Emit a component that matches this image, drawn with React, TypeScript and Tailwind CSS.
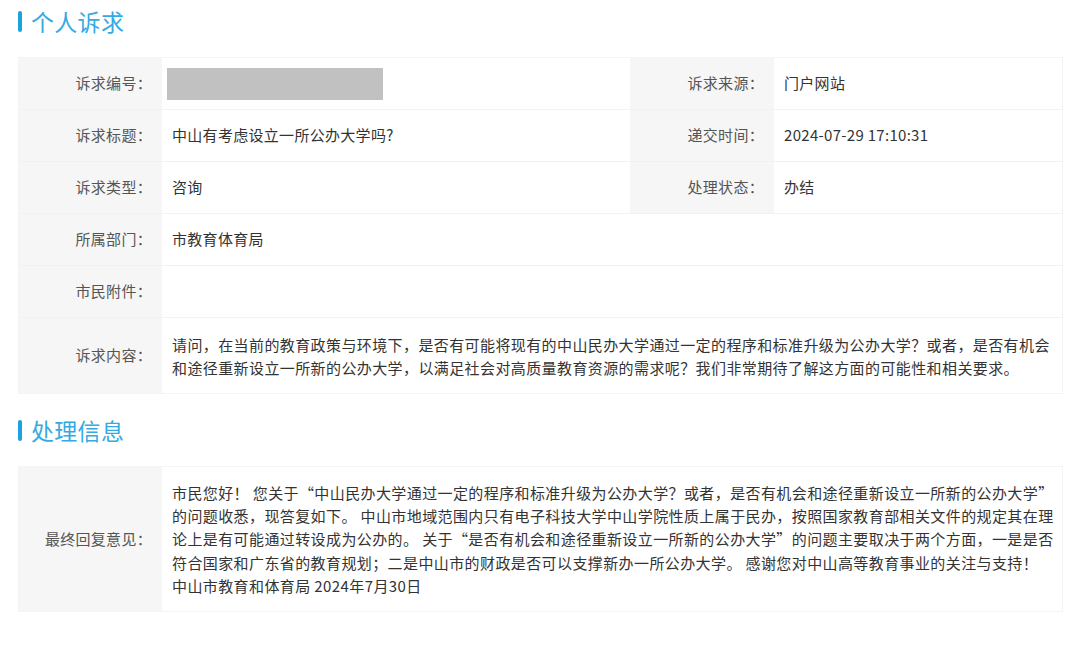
import type { ReactNode } from "react";

const FONT = {
  fontFamily: '"Microsoft YaHei", "Noto Sans CJK SC", "Noto Sans", sans-serif',
};

function SectionTitle({ children }: { children: ReactNode }) {
  return (
    <div className="flex items-center h-[42px] pl-[18px]">
      <span className="w-[4px] h-[21px] rounded-[2px] bg-[#1ba3df]" />
      <span className="ml-[9px] text-[23px] leading-none text-[#35aae2] tracking-[0.3px]">
        {children}
      </span>
    </div>
  );
}

function Label({ children }: { children: ReactNode }) {
  return (
    <div className="bg-[#f6f6f6] flex items-center justify-end pr-[10px] text-[15px] text-[#555] tracking-[0.3px]">
      {children}
    </div>
  );
}

function Value({ children }: { children: ReactNode }) {
  return (
    <div className="flex items-center pl-[10px] text-[15px] text-[#333] tracking-[0.3px]">
      {children}
    </div>
  );
}

export default function App() {
  const rowCls =
    "grid grid-cols-[143px_468px_144px_1fr] h-[52px] border-b border-[#f2f2f2]";
  const wideRowCls = "grid grid-cols-[143px_1fr] h-[52px] border-b border-[#f2f2f2]";

  return (
    <div className="w-[1080px] h-[648px] bg-white overflow-hidden" style={FONT}>
      <SectionTitle>个人诉求</SectionTitle>

      {/* basic request info */}
      <div className="ml-[18px] mt-[15px] w-[1045px] border border-[#f4f4f4]">
        <div className={rowCls}>
          <Label>诉求编号：</Label>
          <Value>
            <span className="block -ml-[5px] w-[216px] h-[32px] bg-[#c1c1c1]" />
          </Value>
          <Label>诉求来源：</Label>
          <Value>门户网站</Value>
        </div>
        <div className={rowCls}>
          <Label>诉求标题：</Label>
          <Value>中山有考虑设立一所公办大学吗?</Value>
          <Label>递交时间：</Label>
          <Value>2024-07-29 17:10:31</Value>
        </div>
        <div className={rowCls}>
          <Label>诉求类型：</Label>
          <Value>咨询</Value>
          <Label>处理状态：</Label>
          <Value>办结</Value>
        </div>
        <div className={wideRowCls}>
          <Label>所属部门：</Label>
          <Value>市教育体育局</Value>
        </div>
        <div className={wideRowCls}>
          <Label>市民附件：</Label>
          <Value> </Value>
        </div>
        <div className="grid grid-cols-[143px_1fr] h-[75px]">
          <Label>诉求内容：</Label>
          <div className="flex flex-col justify-center pl-[10px] text-[15px] leading-[23px] text-[#333] tracking-[0.4px] whitespace-nowrap">
            <div>
              请问，在当前的教育政策与环境下，是否有可能将现有的中山民办大学通过一定的程序和标准升级为公办大学？或者，是否有机会
            </div>
            <div>
              和途径重新设立一所新的公办大学，以满足社会对高质量教育资源的需求呢？我们非常期待了解这方面的可能性和相关要求。
            </div>
          </div>
        </div>
      </div>

      <div className="mt-[15px]">
        <SectionTitle>处理信息</SectionTitle>
      </div>

      {/* reply */}
      <div className="ml-[18px] mt-[15px] w-[1045px] border border-[#f4f4f4]">
        <div className="grid grid-cols-[143px_1fr] h-[144px]">
          <Label>最终回复意见：</Label>
          <div className="flex flex-col justify-center pl-[10px] text-[15px] leading-[23.3px] text-[#333] tracking-[0.4px] whitespace-nowrap">
            <div>
              市民您好！ 您关于“中山民办大学通过一定的程序和标准升级为公办大学？或者，是否有机会和途径重新设立一所新的公办大学”
            </div>
            <div>
              的问题收悉，现答复如下。 中山市地域范围内只有电子科技大学中山学院性质上属于民办，按照国家教育部相关文件的规定其在理
            </div>
            <div>
              论上是有可能通过转设成为公办的。 关于“是否有机会和途径重新设立一所新的公办大学”的问题主要取决于两个方面，一是是否
            </div>
            <div>
              符合国家和广东省的教育规划；二是中山市的财政是否可以支撑新办一所公办大学。 感谢您对中山高等教育事业的关注与支持！
            </div>
            <div>中山市教育和体育局 2024年7月30日</div>
          </div>
        </div>
      </div>
    </div>
  );
}
